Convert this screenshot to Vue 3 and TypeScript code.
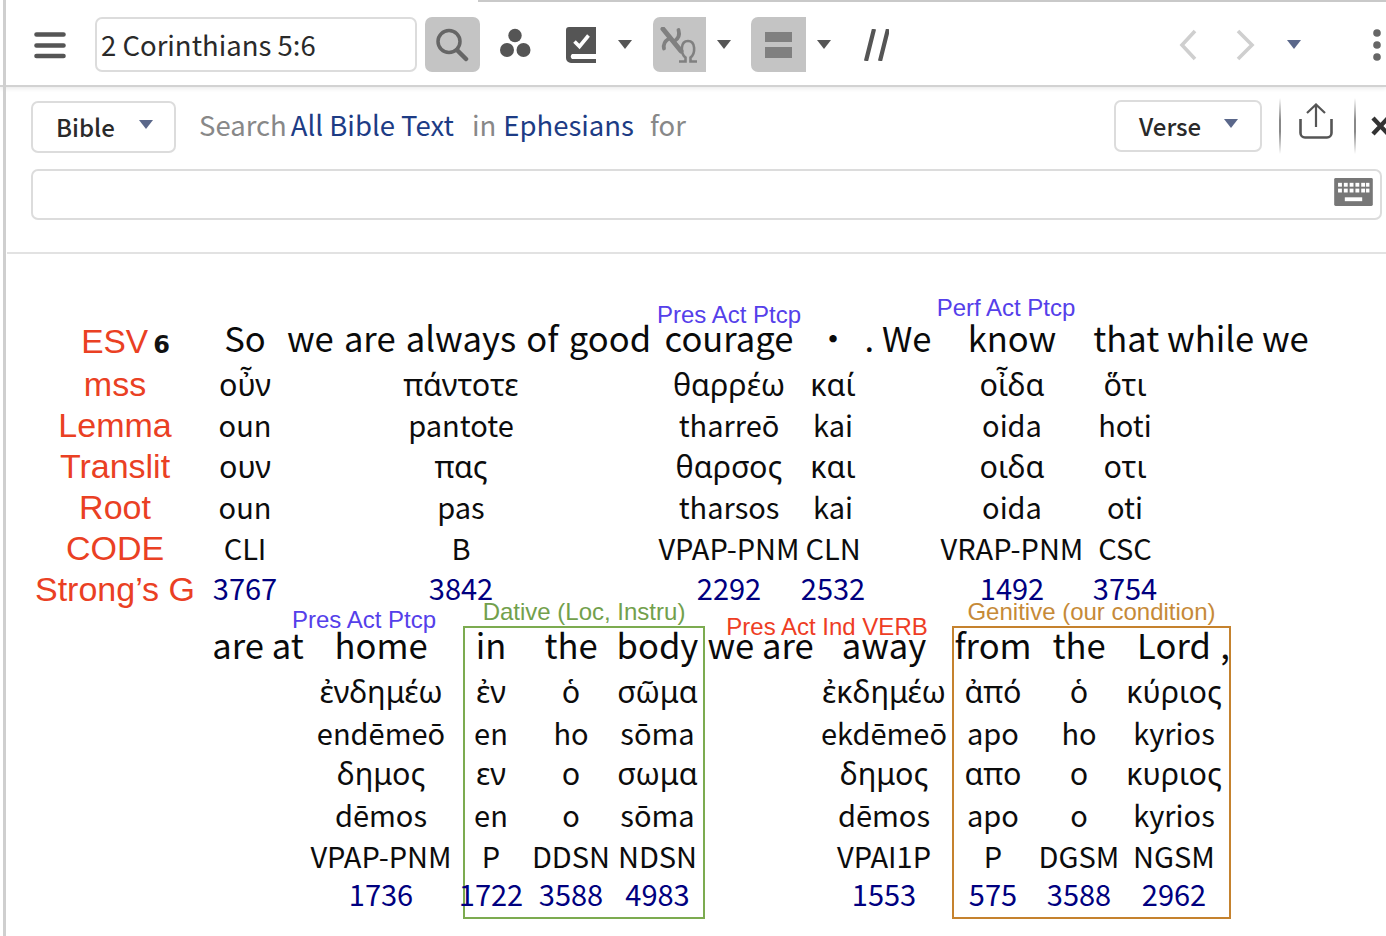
<script setup lang="ts">
interface Tag { text: string; cls: string; dx: number; top: number }
interface Col { w: number; en?: string; enDx?: number; wide?: boolean; lines?: string[]; strong?: string; tag?: Tag }
interface Seg { box?: string; boxTag?: { text: string; cls: string }; cols: Col[]; pr?: number }

const labels = ['mss', 'Lemma', 'Translit', 'Root', 'CODE', 'Strong’s G']

const row1: Col[] = [
  { w: 30, en: 'So', lines: ['οὖν', 'oun', 'ουν', 'oun', 'CLI'], strong: '3767' },
  { w: 402, en: 'we are always of good', enDx: 8, wide: true, lines: ['πάντοτε', 'pantote', 'πας', 'pas', 'B'], strong: '3842' },
  { w: 134, en: 'courage', lines: ['θαρρέω', 'tharreō', 'θαρσος', 'tharsos', 'VPAP-PNM'], strong: '2292', tag: { text: 'Pres Act Ptcp', cls: 'tag-blue', dx: 0, top: -12 } },
  { w: 74, en: '•', lines: ['καί', 'kai', 'και', 'kai', 'CLN'], strong: '2532' },
  { w: 56, en: '. We' },
  { w: 172, en: 'know', lines: ['οἶδα', 'oida', 'οιδα', 'oida', 'VRAP-PNM'], strong: '1492', tag: { text: 'Perf Act Ptcp', cls: 'tag-blue', dx: -12, top: -19 } },
  { w: 54, en: 'that while we', enDx: 76, lines: ['ὅτι', 'hoti', 'οτι', 'oti', 'CSC'], strong: '3754' },
]

const row2: Seg[] = [
  { cols: [
    { w: 200 },
    { w: 116, en: 'are at' },
    { w: 130, en: 'home', lines: ['ἐνδημέω', 'endēmeō', 'δημος', 'dēmos', 'VPAP-PNM'], strong: '1736', tag: { text: 'Pres Act Ptcp', cls: 'tag-blue', dx: -34, top: -21 } },
    { w: 17 },
  ] },
  { box: 'box-green', boxTag: { text: 'Dative (Loc, Instru)', cls: 'tag-green' }, pr: 13, cols: [
    { w: 52, en: 'in', lines: ['ἐν', 'en', 'εν', 'en', 'P'], strong: '1722' },
    { w: 108, en: 'the', lines: ['ὁ', 'ho', 'ο', 'o', 'DDSN'], strong: '3588' },
    { w: 65, en: 'body', lines: ['σῶμα', 'sōma', 'σωμα', 'sōma', 'NDSN'], strong: '4983' },
  ] },
  { cols: [
    { w: 111, en: 'we are' },
    { w: 136, en: 'away', lines: ['ἐκδημέω', 'ekdēmeō', 'δημος', 'dēmos', 'VPAI1P'], strong: '1553', tag: { text: 'Pres Act Ind VERB', cls: 'tag-red', dx: -114, top: -14 } },
  ] },
  { box: 'box-orange', boxTag: { text: 'Genitive (our condition)', cls: 'tag-orange' }, pr: 1, cols: [
    { w: 78, en: 'from', lines: ['ἀπό', 'apo', 'απο', 'apo', 'P'], strong: '575' },
    { w: 94, en: 'the', lines: ['ὁ', 'ho', 'ο', 'o', 'DGSM'], strong: '3588' },
    { w: 96, en: 'Lord', lines: ['κύριος', 'kyrios', 'κυριος', 'kyrios', 'NGSM'], strong: '2962' },
    { w: 6, en: ',' },
  ] },
]
</script>

<template>
  <div class="app">
    <header class="toolbar">
      <svg class="i-menu" width="32" height="28" viewBox="0 0 32 28"><path d="M2.500 3.500H29.500M2.500 14.500H29.500M2.500 25H29.500" stroke="#555" stroke-width="4.600" stroke-linecap="round" fill="none"/></svg>
      <div class="ref-input">2 Corinthians 5:6</div>
      <button class="tool-btn btn-search">
        <svg width="34" height="34" viewBox="0 0 34 34"><circle cx="13" cy="13.500" r="11" stroke="#666" stroke-width="3.500" fill="none"/><path d="M21 22L30 31" stroke="#666" stroke-width="4.500" stroke-linecap="round"/></svg>
      </button>
      <svg class="i-dots" width="32" height="30" viewBox="0 0 32 30"><circle cx="16" cy="7.500" r="6.700" fill="#555"/><circle cx="8" cy="22" r="7" fill="#555"/><circle cx="24.500" cy="22" r="7" fill="#555"/></svg>
      <svg class="i-book" width="30" height="36" viewBox="0 0 30 36"><path d="M3 0H30V27H6A3.500 3.500 0 0 0 6 32H30V36H5A5 5 0 0 1 0 31V3A3 3 0 0 1 3 0Z" fill="#555"/><path d="M8.500 14.500L13.500 19.500L22.500 8.500" stroke="#fff" stroke-width="3.600" fill="none"/></svg>
      <i class="caret caret-1"></i>
      <button class="tool-btn btn-heb">
        <svg width="40" height="36" viewBox="0 0 40 36"><path d="M3 2L21 24" stroke="#808080" stroke-width="5" fill="none" stroke-linecap="round"/><path d="M9 11.500C5 14 3 17 4 21.500M18.500 3C20 8 18.500 11.500 14.500 14" stroke="#808080" stroke-width="3.800" fill="none" stroke-linecap="round"/><path d="M19 34.500H25.500V30.500C20.500 27 20 14 28 14C36 14 35.500 27 30.500 30.500V34.500H37" stroke="#808080" stroke-width="2.600" fill="none"/></svg>
      </button>
      <i class="caret caret-2"></i>
      <button class="tool-btn btn-split">
        <span class="bar"></span><span class="bar"></span>
      </button>
      <i class="caret caret-3"></i>
      <svg class="i-slash" width="25" height="32" viewBox="0 0 25 32"><path d="M10 0L2 32M24 0L16 32" stroke="#555" stroke-width="4.200" fill="none"/></svg>
      <svg class="i-prev" width="18" height="32" viewBox="0 0 18 32"><path d="M16 2L3 16L16 30" stroke="#cfcfcf" stroke-width="3.600" fill="none"/></svg>
      <svg class="i-next" width="20" height="32" viewBox="0 0 20 32"><path d="M3 2L17 16L3 30" stroke="#cfcfcf" stroke-width="3.600" fill="none"/></svg>
      <i class="caret caret-nav"></i>
      <svg class="i-kebab" width="11" height="32" viewBox="0 0 11 32"><circle cx="5" cy="4" r="3.800" fill="#666"/><circle cx="5" cy="16" r="3.800" fill="#666"/><circle cx="5" cy="28" r="3.800" fill="#666"/></svg>
    </header>

    <section class="panel">
      <div class="search-row">
        <button class="select select-bible"><span>Bible</span><i class="caret caret-blue"></i></button>
        <span class="word w-search">Search</span>
        <a class="word link w-all">All Bible Text</a>
        <span class="word w-in">in</span>
        <a class="word link w-eph">Ephesians</a>
        <span class="word w-for">for</span>
        <div class="right-tools">
          <button class="select select-verse"><span>Verse</span><i class="caret caret-blue"></i></button>
          <span class="sep sep-1"></span>
          <svg class="i-share" width="34" height="36" viewBox="0 0 34 36"><path d="M17 24V2M8 10L17 1.500L26 10" stroke="#555" stroke-width="2.200" fill="none"/><path d="M1.500 16V30A4.500 4.500 0 0 0 6 34.500H28A4.500 4.500 0 0 0 32.500 30V16" stroke="#555" stroke-width="2.600" fill="none"/></svg>
          <span class="sep sep-2"></span>
          <svg class="i-close" width="18" height="20" viewBox="0 0 18 20"><path d="M2 2L17 18M17 2L2 18" stroke="#333" stroke-width="4.400"/></svg>
        </div>
      </div>
      <div class="query">
        <svg class="i-keys" width="39" height="28" viewBox="0 0 40 29"><rect width="40" height="29" rx="1.500" fill="#777"/><g fill="#fff"><rect x="4" y="5" width="4" height="4"/><rect x="10" y="5" width="4" height="4"/><rect x="16" y="5" width="4" height="4"/><rect x="22" y="5" width="4" height="4"/><rect x="28" y="5" width="4" height="4"/><rect x="33" y="5" width="3.500" height="4"/><rect x="4" y="11" width="4" height="4"/><rect x="10" y="11" width="4" height="4"/><rect x="16" y="11" width="4" height="4"/><rect x="22" y="11" width="4" height="4"/><rect x="28" y="11" width="4" height="4"/><rect x="33" y="11" width="3.500" height="4"/><rect x="11" y="20" width="18" height="4"/></g></svg>
      </div>
    </section>

    <main class="reading">
      <div class="verse-row first">
        <div class="col label-col">
          <div class="en esv"><span class="label">ESV</span><b class="vnum">6</b></div>
          <div v-for="l in labels" :key="l" class="cell label">{{ l }}</div>
        </div>
        <div v-for="(c, i) in row1" :key="i" class="col" :style="{ width: c.w + 'px' }">
          <div class="en" :class="{ wide: c.wide }" :style="{ marginLeft: (c.enDx || 0) * 2 + 'px' }">
            <span class="en-text">{{ c.en }}</span>
            <span v-if="c.tag" class="tag" :class="c.tag.cls" :style="{ marginLeft: c.tag.dx + 'px', top: c.tag.top + 'px' }">{{ c.tag.text }}</span>
          </div>
          <template v-if="c.lines">
            <div v-for="(t, j) in c.lines" :key="j" class="cell" :class="{ greek: j === 0 || j === 2 }">{{ t }}</div>
            <div class="cell strong">{{ c.strong }}</div>
          </template>
        </div>
      </div>

      <div class="verse-row second">
        <div v-for="(s, si) in row2" :key="si" class="seg" :class="s.box" :style="{ paddingRight: (s.pr || 0) + 'px' }">
          <span v-if="s.boxTag" class="tag box-tag" :class="s.boxTag.cls">{{ s.boxTag.text }}</span>
          <div v-for="(c, i) in s.cols" :key="i" class="col" :style="{ width: c.w + 'px' }">
            <div class="en en-2">
              <span class="en-text">{{ c.en }}</span>
              <span v-if="c.tag" class="tag" :class="c.tag.cls" :style="{ marginLeft: c.tag.dx + 'px', top: c.tag.top + 'px' }">{{ c.tag.text }}</span>
            </div>
            <template v-if="c.lines">
              <div v-for="(t, j) in c.lines" :key="j" class="cell" :class="{ greek: j === 0 || j === 2 }">{{ t }}</div>
              <div class="cell strong last">{{ c.strong }}</div>
            </template>
          </div>
        </div>
      </div>
    </main>
  </div>
</template>

<style>
html, body { margin: 0; background: #fff; }
</style>

<style scoped>
.app {
  position: relative;
  width: 1386px;
  height: 936px;
  overflow: hidden;
  background: #fff;
  font-family: "Noto Sans CJK SC", "Noto Sans", sans-serif;
  color: #111;
}
.app::before {
  content: "";
  position: absolute;
  left: 3px;
  top: 0;
  bottom: 0;
  width: 3px;
  background: #cfcfcf;
  z-index: 2;
}
.app::after {
  content: "";
  position: absolute;
  left: 478px;
  right: 0;
  top: 0;
  height: 2px;
  background: #c9c9c9;
}
button { font-family: inherit; padding: 0; border: 0; background: none; }

.toolbar {
  display: flex;
  align-items: center;
  height: 87px;
  padding-top: 4px;
  box-sizing: border-box;
  border-bottom: 2px solid #d2d2d2;
  box-shadow: 0 2px 4px rgba(0, 0, 0, 0.08);
}
.i-menu { margin-left: 34px; flex: none; }
.ref-input {
  margin-left: 29px;
  width: 322px;
  height: 55px;
  flex: none;
  box-sizing: border-box;
  border: 2px solid #dcdcdc;
  border-radius: 7px;
  padding-left: 4px;
  font-size: 27.500px;
  line-height: 50px;
  color: #2a2a2a;
}
.tool-btn {
  flex: none;
  display: flex;
  align-items: center;
  justify-content: center;
  height: 55px;
  background: #c4c4c4;
  border-radius: 7px 0 0 7px;
}
.btn-search { margin-left: 8px; width: 55px; border-radius: 7px; }
.i-dots { margin-left: 19px; flex: none; margin-top: -3px; }
.i-book { margin-left: 35px; flex: none; }
.caret {
  display: block;
  flex: none;
  width: 0;
  height: 0;
  border-left: 7.500px solid transparent;
  border-right: 7.500px solid transparent;
  border-top: 9px solid #555;
}
.caret-1 { margin-left: 22px; }
.btn-heb { margin-left: 21px; width: 53px; }
.caret-2 { margin-left: 11px; }
.btn-split { margin-left: 20px; width: 55px; flex-direction: column; gap: 5px; }
.bar { display: block; width: 27px; height: 10.500px; background: #808080; }
.caret-3 { margin-left: 11px; }
.i-slash { margin-left: 33px; flex: none; }
.i-prev { margin-left: 290px; flex: none; }
.i-next { margin-left: 38px; flex: none; }
.caret-nav { margin-left: 32px; border-top-color: #5a678a; }
.i-kebab { margin-left: 71px; flex: none; }

.panel {
  height: 165px;
  margin-left: 7px;
  padding-left: 24px;
  border-bottom: 2px solid #e2e2e2;
}
.search-row {
  display: flex;
  align-items: center;
  height: 52px;
  padding-top: 14px;
}
.select {
  flex: none;
  display: flex;
  align-items: center;
  box-sizing: border-box;
  height: 52px;
  border: 2px solid #dcdcdc;
  border-radius: 7px;
  padding: 0 0 2px 23px;
  font-size: 24px;
  font-weight: 500;
  color: #2a2a2a;
  background: #fff;
}
.select-bible { width: 145px; }
.select-bible .caret { margin-left: 24px; margin-top: -4px; }
.select-verse { width: 148px; }
.select-verse .caret { margin-left: 23px; margin-top: -4px; }
.caret-blue { border-top-color: #5a678a; }
.word { font-size: 27.500px; color: #888; white-space: nowrap; line-height: 40px; margin-top: -7px; }
.link { color: #1d3c85; }
.w-search { margin-left: 23px; }
.w-all { margin-left: 4px; }
.w-in { margin-left: 18px; }
.w-eph { margin-left: 7px; }
.w-for { margin-left: 16px; }
.right-tools {
  flex: none;
  width: 272px;
  height: 56px;
  margin-left: auto;
  margin-top: -3px;
  align-self: flex-start;
  display: flex;
  align-items: center;
}
.sep {
  flex: none;
  width: 2px;
  height: 56px;
  background: linear-gradient(to bottom, #fff, #888 40%, #888 60%, #fff);
}
.sep-1 { margin-left: 17px; }
.i-share { margin-left: 18px; flex: none; margin-top: -10px; }
.sep-2 { margin-left: 21px; }
.i-close { margin-left: 15px; flex: none; margin-top: -1px; }
.query {
  display: flex;
  align-items: center;
  justify-content: flex-end;
  box-sizing: border-box;
  width: 1351px;
  height: 51px;
  margin-top: 16px;
  padding-right: 7px;
  border: 2px solid #dcdcdc;
  border-radius: 7px;
}
.i-keys { margin-top: -6px; }

.reading { padding-top: 60px; }
.verse-row { display: flex; }
.second { margin-top: 16px; }
.seg {
  position: relative;
  display: flex;
  flex: none;
  border: 2px solid transparent;
  border-left-width: 0;
  border-right-width: 0;
}
.box-green, .box-orange { border-left-width: 2px; border-right-width: 2px; }
.box-green { border-color: #7cab50; }
.box-orange { border-color: #c5822e; }
.col {
  display: flex;
  flex: none;
  flex-direction: column;
  align-items: center;
  white-space: nowrap;
}
.label-col { width: 230px; }
.en {
  position: relative;
  height: 50px;
  font-size: 34.600px;
  line-height: 46px;
  color: #0a0a0a;
  display: flex;
  justify-content: center;
  flex: none;
}
.wide { word-spacing: 2.500px; }
.en-2 { height: 41px; line-height: 33px; margin-bottom: 2px; }
.esv { margin-left: 21px; align-items: baseline; top: 5px; }
.label {
  font-family: "Liberation Sans", Arial, sans-serif;
  font-size: 33.500px;
  color: #ea4023;
}
.vnum {
  font-family: "DejaVu Sans", sans-serif;
  font-size: 24px;
  color: #111;
  margin-left: 5px;
}
.cell {
  flex: none;
  height: 41px;
  line-height: 38px;
  font-size: 29px;
  color: #0c0c0c;
}
.second .cell { line-height: 40px; }
.cell.label { font-size: 34px; color: #ea4023; line-height: 41px; }
.cell.greek, .second .cell.greek { font-family: "Noto Sans", sans-serif; font-size: 30.500px; line-height: 41px; }
.strong { color: #00007f; }
.first .strong { line-height: 36px; }
.second .strong.last { height: 41px; line-height: 35px; }
.tag {
  position: absolute;
  font-family: "Liberation Sans", Arial, sans-serif;
  font-size: 24px;
  line-height: 26px;
  white-space: nowrap;
}
.box-tag { left: 50%; top: -29px; transform: translateX(-50%); }
.tag-blue { color: #5540ea; }
.tag-green { color: #72a04c; }
.tag-orange { color: #c68a38; }
.tag-red { color: #ee3d24; }
</style>
